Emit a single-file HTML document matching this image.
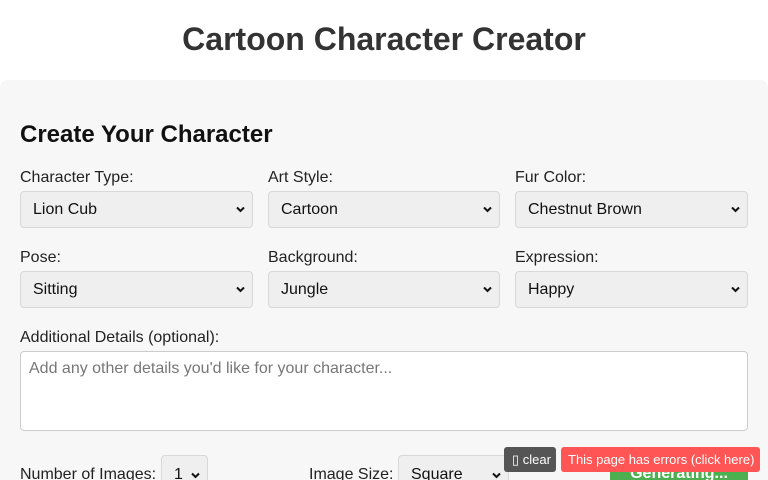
<!DOCTYPE html>
<html><head><style>
*{box-sizing:border-box}
html,body{margin:0;width:768px;height:480px;overflow:hidden}
body{background:#fff;font-family:"Liberation Sans",sans-serif;color:#222;position:relative}
h1{margin:0;position:absolute;top:21px;width:100%;text-align:center;font-size:32px;color:#333;font-weight:bold}
.card{position:absolute;top:80px;left:0;width:768px;height:400px;background:#f7f7f7;border-radius:8px 8px 0 0}
h2{position:absolute;left:20px;top:121px;margin:0;font-size:24px;font-weight:bold;color:#111}
.lbl{position:absolute;font-size:16px;color:#222;white-space:nowrap}
.sel{position:absolute;height:37px;background:#efefef;border:1px solid #d8d8d8;border-radius:4px;font-size:16px;padding:0 12px;line-height:36px;color:#111}
.sel svg{position:absolute;right:7px;top:14px}
.ta{position:absolute;left:20px;top:351px;width:728px;height:80px;background:#fff;border:1px solid #ccc;border-radius:4px;padding:8px;font-size:16px;color:#777}
.btn{position:absolute;font-size:13px;color:#fff;border-radius:3px;height:25px;line-height:25px;padding:0 8px;white-space:nowrap;overflow:hidden}
</style></head><body>
<h1>Cartoon Character Creator</h1>
<div class="card"></div>
<h2>Create Your Character</h2>

<div class="lbl" style="left:20px;top:169px">Character Type:</div>
<div class="lbl" style="left:268px;top:169px">Art Style:</div>
<div class="lbl" style="left:515px;top:169px">Fur Color:</div>
<div class="sel" style="left:20px;top:191px;width:233px">Lion Cub<svg width="9" height="7" viewBox="0 0 9 7"><path d="M1 1.5L4.5 5L8 1.5" stroke="#111" stroke-width="2" fill="none"/></svg></div>
<div class="sel" style="left:268px;top:191px;width:232px">Cartoon<svg width="9" height="7" viewBox="0 0 9 7"><path d="M1 1.5L4.5 5L8 1.5" stroke="#111" stroke-width="2" fill="none"/></svg></div>
<div class="sel" style="left:515px;top:191px;width:233px">Chestnut Brown<svg width="9" height="7" viewBox="0 0 9 7"><path d="M1 1.5L4.5 5L8 1.5" stroke="#111" stroke-width="2" fill="none"/></svg></div>

<div class="lbl" style="left:20px;top:249px">Pose:</div>
<div class="lbl" style="left:268px;top:249px">Background:</div>
<div class="lbl" style="left:515px;top:249px">Expression:</div>
<div class="sel" style="left:20px;top:271px;width:233px">Sitting<svg width="9" height="7" viewBox="0 0 9 7"><path d="M1 1.5L4.5 5L8 1.5" stroke="#111" stroke-width="2" fill="none"/></svg></div>
<div class="sel" style="left:268px;top:271px;width:232px">Jungle<svg width="9" height="7" viewBox="0 0 9 7"><path d="M1 1.5L4.5 5L8 1.5" stroke="#111" stroke-width="2" fill="none"/></svg></div>
<div class="sel" style="left:515px;top:271px;width:233px">Happy<svg width="9" height="7" viewBox="0 0 9 7"><path d="M1 1.5L4.5 5L8 1.5" stroke="#111" stroke-width="2" fill="none"/></svg></div>

<div class="lbl" style="left:20px;top:329px">Additional Details (optional):</div>
<div class="ta">Add any other details you'd like for your character...</div>

<div class="lbl" style="left:20px;top:466px">Number of Images:</div>
<div class="sel" style="left:161px;top:455px;width:47px;height:40px;line-height:38px">1<svg width="9" height="7" viewBox="0 0 9 7" style="top:16px"><path d="M1 1.5L4.5 5L8 1.5" stroke="#111" stroke-width="2" fill="none"/></svg></div>
<div class="lbl" style="left:309px;top:466px">Image Size:</div>
<div class="sel" style="left:398px;top:455px;width:111px;height:40px;line-height:38px">Square<svg width="9" height="7" viewBox="0 0 9 7" style="top:16px"><path d="M1 1.5L4.5 5L8 1.5" stroke="#111" stroke-width="2" fill="none"/></svg></div>
<div style="position:absolute;left:610px;top:461px;width:138px;height:30px;background:#4caf50;color:#fff;font-weight:bold;font-size:16px;text-align:center;line-height:26px;border-radius:3px">Generating...</div>

<div class="btn" style="left:504px;top:447px;background:#555;width:52px">&#9647; clear</div>
<div class="btn" style="left:561px;top:447px;background:#f55;width:199px;padding:0 7px">This page has errors (click here)</div>
</body></html>
